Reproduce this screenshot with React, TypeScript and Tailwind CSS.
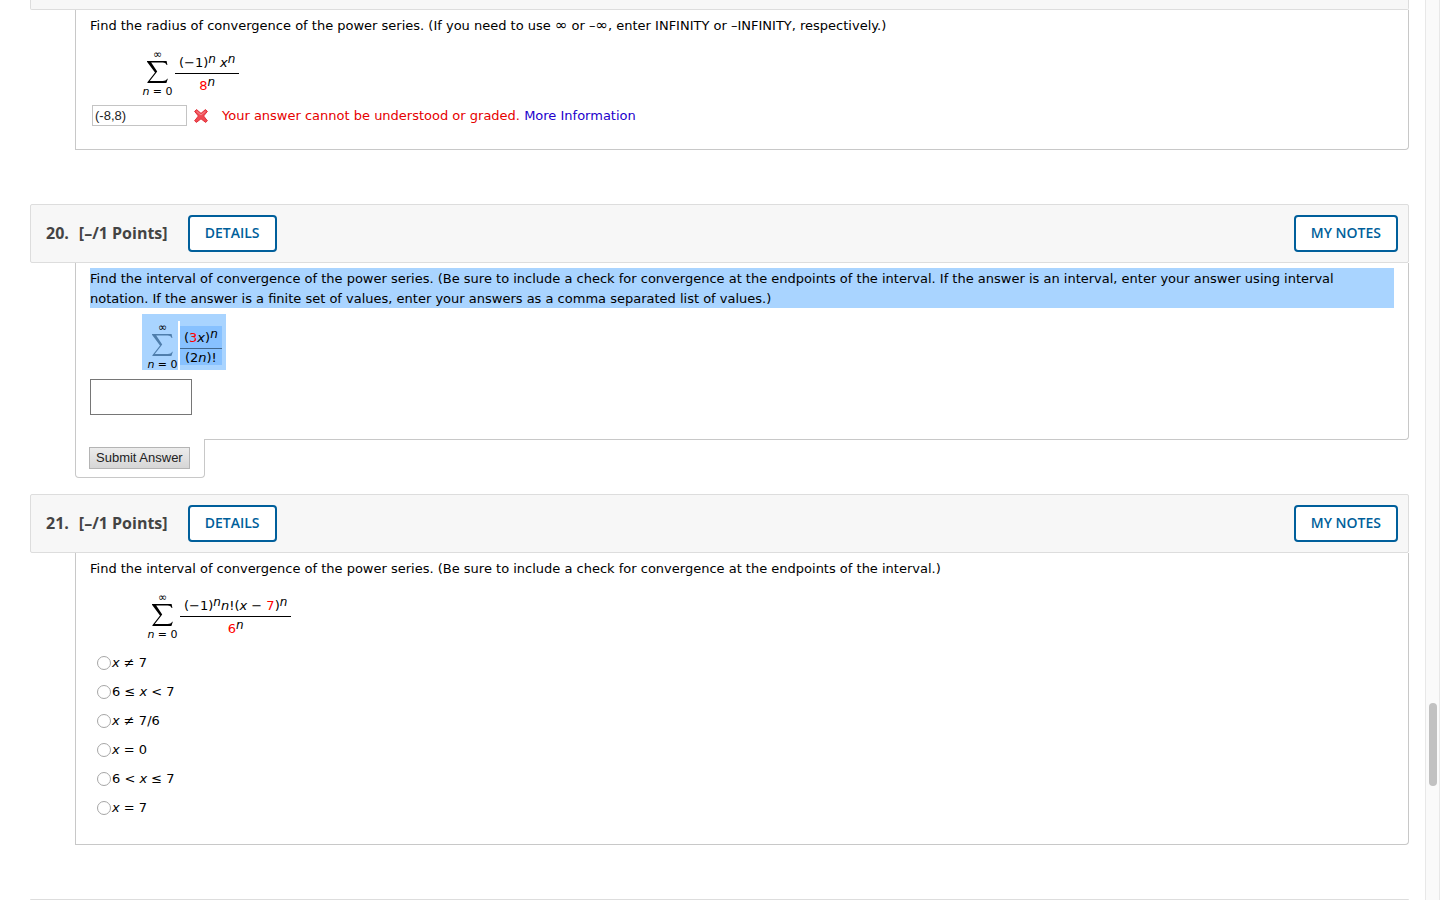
import React from 'react';

interface FormulaProps {
  numerator: React.ReactNode;
  denominator: React.ReactNode;
  selected?: boolean;
  className?: string;
}

const choices: { id: string; label: React.ReactNode }[] = [
  { id: 'a', label: <><i>x</i> ≠ 7</> },
  { id: 'b', label: <>6 ≤ <i>x</i> &lt; 7</> },
  { id: 'c', label: <><i>x</i> ≠ 7/6</> },
  { id: 'd', label: <><i>x</i> = 0</> },
  { id: 'e', label: <>6 &lt; <i>x</i> ≤ 7</> },
  { id: 'f', label: <><i>x</i> = 7</> },
];

const Red: React.FC<{ children: React.ReactNode }> = ({ children }) => (
  <span className="text-[#ff0000]">{children}</span>
);

const Power: React.FC = () => (
  <i className="relative -top-1 text-xs leading-none">n</i>
);

const Infinity: React.FC = () => (
  <span className="text-[15px] leading-none">∞</span>
);

const Sigma: React.FC<{ faded?: boolean }> = ({ faded }) => (
  <svg
    width="21"
    height="22"
    viewBox="0 0 21 22"
    className={faded ? 'text-[#4f7eac]' : 'text-black'}
    aria-hidden="true"
  >
    <path
      fill="currentColor"
      d="M0 0H19.6L20.4 4H19.6C19.2 2.3 18 1.4 15.6 1.4H4.2L10.2 10.6L2.8 20H15.8C18 20 19.2 19.4 20.2 17.8H20.8L19.4 22H0.4V21.2L8 11.6L0 0.8Z"
    />
  </svg>
);

const Formula: React.FC<FormulaProps> = ({ numerator, denominator, selected = false, className = '' }) => (
  <div className={`flex h-14 w-fit ${selected ? 'border-t-[7px] border-[#a9d4ff]' : 'pt-[7px]'} ${className}`}>
    <div className={selected ? 'bg-[#a9d4ff] pl-[5px]' : ''}>
      <div className="flex w-[31px] flex-col items-center pt-px">
        <span className="h-3 text-[11px] leading-3">∞</span>
        <Sigma faded={selected} />
        <span className="mt-px text-[11px] leading-4 whitespace-nowrap">
          <i>n</i> = 0
        </span>
      </div>
    </div>
    <div className={`ml-0.5 pt-[5px] text-center whitespace-nowrap ${selected ? 'bg-[#a9d4ff] pr-1' : ''}`}>
      <div className={selected ? 'bg-[#87c1ff]' : ''}>
        <div className={`border-b px-1 ${selected ? 'h-[23px] border-[#41688f] leading-6' : 'h-[21px] border-black leading-5'}`}>
          {numerator}
        </div>
        <div className={selected ? 'h-4 leading-[18px]' : 'leading-6'}>{denominator}</div>
      </div>
    </div>
  </div>
);

const OutlineButton: React.FC<{ children: React.ReactNode }> = ({ children }) => (
  <button
    type="button"
    className="h-[37px] min-w-[89px] rounded border-2 border-[#005f9b] bg-white px-[15px] pb-0.5 font-['Open_Sans',sans-serif] text-sm font-semibold text-[#005f9b]"
  >
    {children}
  </button>
);

const QuestionHeader: React.FC<{ number: number }> = ({ number }) => (
  <header className="flex h-[59px] items-center rounded-xs border border-[#dddddd] bg-[#f7f7f7] pr-[10px] pl-[15px]">
    <h2 className="flex gap-[10px] pb-0.5 font-['Open_Sans',sans-serif] text-base font-bold text-[#444444]">
      <span>{number}.</span>
      <span>[–/1 Points]</span>
    </h2>
    <div className="ml-5 flex flex-1 justify-between">
      <OutlineButton>DETAILS</OutlineButton>
      <OutlineButton>MY NOTES</OutlineButton>
    </div>
  </header>
);

const QuestionBody: React.FC<{ children: React.ReactNode; className?: string }> = ({ children, className = '' }) => (
  <div className={`ml-[45px] rounded-br border-x border-b border-[#c8c8c8] px-[14px] pt-[5px] ${className}`}>
    {children}
  </div>
);

const Prompt: React.FC<{ id: string; selected?: boolean; children: React.ReactNode }> = ({ id, selected, children }) => (
  <p id={id} className={selected ? 'bg-[#a9d4ff]' : ''}>
    <span className="relative top-px">{children}</span>
  </p>
);

const WrongMark: React.FC = () => (
  <svg width="14" height="14" viewBox="0 0 14 14" aria-hidden="true">
    <path
      d="M2.6 0.6L7 4.4L11.4 0.6L13.4 2.4L9.6 7L13.4 11.8L11.6 13.4L7 9.8L2.4 13.4L0.6 11.8L4.4 7L0.6 2.4Z"
      fill="#f04a52"
      stroke="#e0303a"
      strokeWidth="1"
      strokeLinejoin="round"
    />
    <path d="M2.6 2.4L7 6L11.4 2.4" fill="none" stroke="#f78a8f" strokeWidth="1" />
  </svg>
);

export default function App() {
  return (
    <div className="flex h-screen overflow-hidden bg-white font-['Verdana','DejaVu_Sans',sans-serif] text-[13px] leading-5 text-black">
      <main className="min-w-0 flex-1 overflow-hidden pr-4 pl-[30px]">
        {/* Question 19, scrolled partly out of view */}
        <section>
          <div className="h-[10px] rounded-b-xs border-x border-b border-[#dddddd] bg-[#f7f7f7]" />
          <QuestionBody className="pb-[23px]">
            <Prompt id="question-19">
              Find the radius of convergence of the power series. (If you need to use <Infinity /> or –<Infinity />, enter INFINITY or –INFINITY, respectively.)
            </Prompt>
            <Formula
              className="mt-[6px] ml-[52px]"
              numerator={<>(−1)<Power /> <i>x</i><Power /></>}
              denominator={<><Red>8</Red><Power /></>}
            />
            <div className="mt-2 flex items-center">
              <input
                type="text"
                defaultValue="(-8,8)"
                aria-labelledby="question-19"
                className="ml-0.5 h-[21px] w-[95px] border border-[#c4c4c4] px-0.5 font-['Liberation_Sans',sans-serif] text-[13px] text-[#222222]"
              />
              <div className="ml-[7px] flex items-center gap-[14px]">
                <WrongMark />
                <p className="text-[#e60000]">
                  Your answer cannot be understood or graded.{' '}
                  <a href="#more" className="text-[#2200cc]">More Information</a>
                </p>
              </div>
            </div>
          </QuestionBody>
        </section>

        <section className="mt-[54px]">
          <QuestionHeader number={20} />
          <QuestionBody className="pb-6">
            <Prompt id="question-20" selected>
              Find the interval of convergence of the power series. (Be sure to include a check for convergence at the endpoints of the interval. If the answer is an interval, enter your answer using interval notation. If the answer is a finite set of values, enter your answers as a comma separated list of values.)
            </Prompt>
            <Formula
              selected
              className="mt-[6px] ml-[52px]"
              numerator={<>(<Red>3</Red><i>x</i>)<Power /></>}
              denominator={<>(2<i>n</i>)!</>}
            />
            <input
              type="text"
              aria-labelledby="question-20"
              className="mt-[9px] block h-9 w-[102px] border border-[#767676] px-2"
            />
          </QuestionBody>
          <div className="relative -mt-px ml-[45px] w-[130px] rounded-b border-x border-b border-[#c8c8c8] bg-white pt-2 pb-2 pl-[13px]">
            <button
              type="button"
              className="block h-[22px] border border-[#b4b4b4] bg-linear-to-b from-[#ececec] to-[#d6d6d6] px-[6px] font-['Liberation_Sans',sans-serif] text-[13px] leading-5 whitespace-nowrap text-[#222222]"
            >
              Submit Answer
            </button>
          </div>
        </section>

        <section className="mt-4">
          <QuestionHeader number={21} />
          <QuestionBody className="pb-[22px]">
            <Prompt id="question-21">
              Find the interval of convergence of the power series. (Be sure to include a check for convergence at the endpoints of the interval.)
            </Prompt>
            <Formula
              className="mt-[6px] ml-[57px]"
              numerator={<>(−1)<Power /><i>n</i>!(<i>x</i> − <Red>7</Red>)<Power /></>}
              denominator={<><Red>6</Red><Power /></>}
            />
            <div role="radiogroup" aria-labelledby="question-21" className="mt-2 ml-[7px]">
              {choices.map((choice) => (
                <label key={choice.id} className="flex h-[29px] w-fit items-center">
                  <input
                    type="radio"
                    name="interval"
                    value={choice.id}
                    className="size-[14px] appearance-none rounded-full border border-[#a6a6a6] bg-white checked:border-4 checked:border-[#005f9b]"
                  />
                  <span className="ml-px">{choice.label}</span>
                </label>
              ))}
            </div>
          </QuestionBody>
        </section>

        {/* Top edge of the next question */}
        <div className="mt-[54px] h-px rounded-t-xs border-t border-[#dddddd]" />
      </main>

      {/* Scrollbar track */}
      <div className="relative w-[15px] shrink-0 border-x border-[#e8e8e8] bg-[#fafafa]">
        <div className="absolute top-[78.1%] left-[3px] h-[9.2%] w-2 rounded-full bg-[#c1c1c1]" />
      </div>
    </div>
  );
}
